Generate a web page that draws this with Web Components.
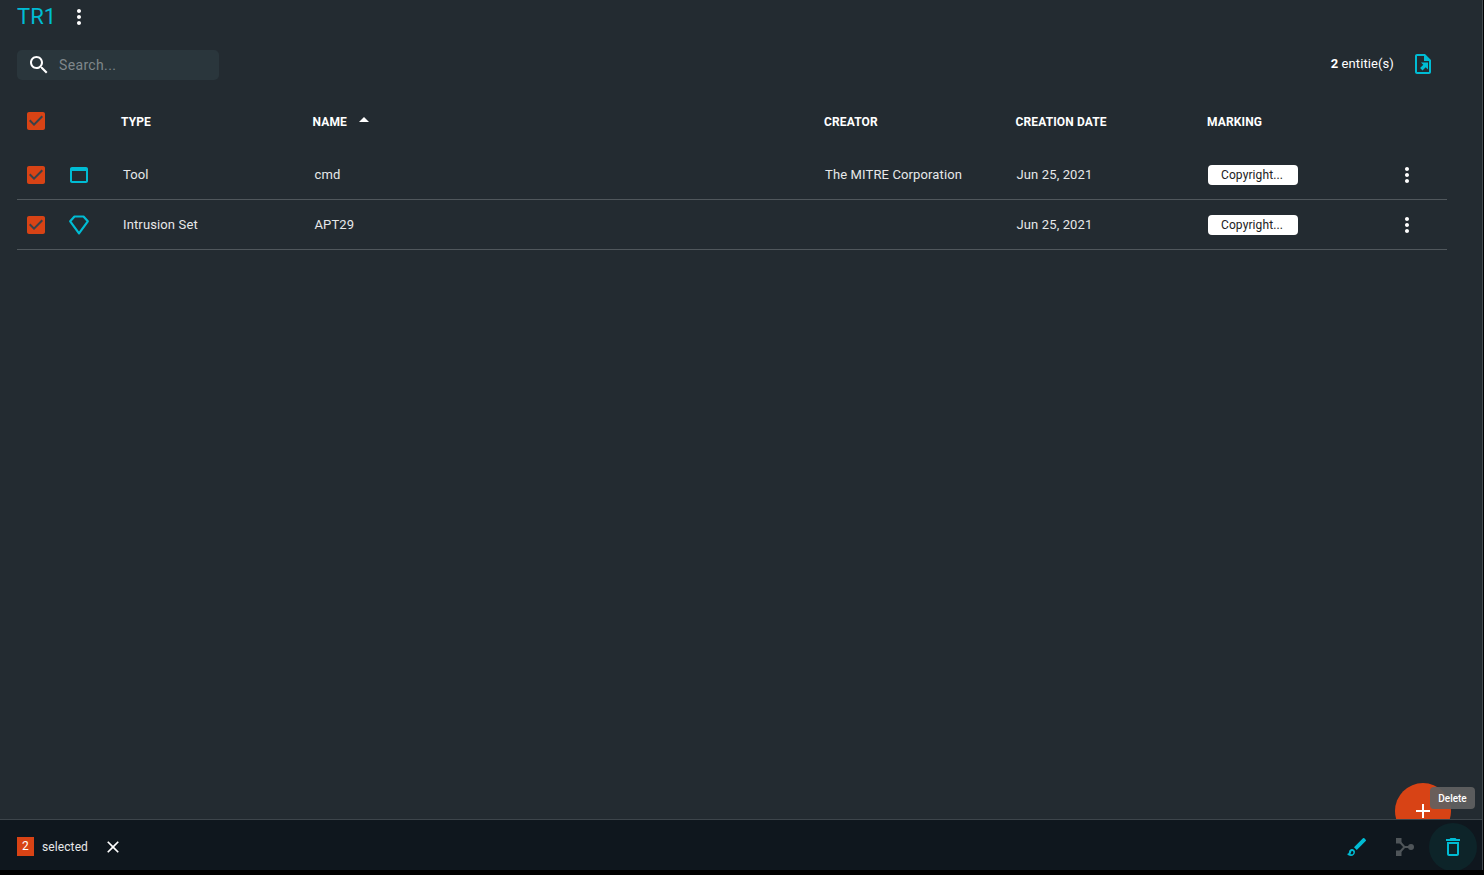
<!DOCTYPE html>
<html>
<head>
<meta charset="utf-8">
<title>TR1</title>
<style>
    html, body { margin: 0; height: 100%; background: #000; overflow: hidden; }
    body { font-family: Roboto, "Liberation Sans", sans-serif; color: #fff; }
</style>
</head>
<body>
<app-page>
    <report-header slot="top" title-text="TR1"></report-header>
    <search-toolbar slot="top" count="2"></search-toolbar>
    <entity-table slot="top"></entity-table>
    <add-fab slot="over"></add-fab>
    <delete-tooltip slot="over">Delete</delete-tooltip>
    <selection-bar slot="bottom" count="2"></selection-bar>
</app-page>
<script>
const icons = {
    more: '<path d="M12 8c1.1 0 2-.9 2-2s-.9-2-2-2-2 .9-2 2 .9 2 2 2zm0 2c-1.1 0-2 .9-2 2s.9 2 2 2 2-.9 2-2-.9-2-2-2zm0 6c-1.1 0-2 .9-2 2s.9 2 2 2 2-.9 2-2-.9-2-2-2z"/>',
    search: '<path d="M15.5 14h-.79l-.28-.27C15.41 12.59 16 11.11 16 9.5 16 5.91 13.09 3 9.5 3S3 5.91 3 9.5 5.91 16 9.5 16c1.61 0 3.09-.59 4.23-1.57l.27.28v.79l5 4.99L20.49 19l-4.99-5zm-6 0C7.01 14 5 11.99 5 9.5S7.01 5 9.5 5 14 7.01 14 9.5 11.99 14 9.5 14z"/>',
    checked: '<path d="M19 3H5c-1.1 0-2 .9-2 2v14c0 1.1.9 2 2 2h14c1.1 0 2-.9 2-2V5c0-1.1-.9-2-2-2z" fill="#d84315"/><path d="M10 17l-5-5 1.41-1.41L10 14.17l7.59-7.59L19 8l-9 9z" fill="#37424a"/>',
    tool: '<path d="M5 4h14c1.1 0 2 .9 2 2v12c0 1.1-.9 2-2 2H5c-1.1 0-2-.9-2-2V6c0-1.1.9-2 2-2zm0 4v10h14V8H5z"/>',
    diamond: '<path d="M7.5 3.5h9l4.3 4.8L12 20.3 3.2 8.3z" fill="none" stroke="currentColor" stroke-width="2.2" stroke-linejoin="round"/>',
    file: '<path d="M14 2H6c-1.1 0-2 .9-2 2v16c0 1.1.9 2 2 2h12c1.1 0 2-.9 2-2V8l-6-6zm4 18H6V4h7v5h5v11z"/><path d="M10 10.5h7v7l-2.3-2.3-3.2 3.2-2.4-2.4 3.2-3.2z"/>',
    sort: '<path d="M7 14l5-5 5 5z"/>',
    close: '<path d="M19 6.41L17.59 5 12 10.59 6.41 5 5 6.41 10.59 12 5 17.59 6.41 19 12 13.41 17.59 19 19 17.59 13.41 12z"/>',
    plus: '<path d="M19 13h-6v6h-2v-6H5v-2h6V5h2v6h6v2z"/>',
    brush: '<path d="M7 14c-1.66 0-3 1.34-3 3 0 1.31-1.16 2-2 2 .92 1.22 2.49 2 4 2 2.21 0 4-1.79 4-4 0-1.66-1.34-3-3-3zm0 5.2c-.2 0-1.2-.1-1.6-.3.4-.5.8-1.1.8-1.9 0-.6.4-1 .8-1 .8 0 1.4.6 1.4 1.4 0 1-.6 1.8-1.4 1.8zM20.71 4.63l-1.34-1.34a.996.996 0 0 0-1.41 0L9 12.25 11.75 15l8.96-8.96a.996.996 0 0 0 0-1.41z"/>',
    merge: '<path d="M3 3h5.5v5.5H3zM3 15.5h5.5V21H3z"/><circle cx="18" cy="12" r="3"/><path d="M6 6l5.5 6L6 18M11 12h7" fill="none" stroke="currentColor" stroke-width="2"/>',
    trash: '<path d="M6 19c0 1.1.9 2 2 2h8c1.1 0 2-.9 2-2V7H6v12zM8 9h8v10H8V9zm7.5-5l-1-1h-5l-1 1H5v2h14V4h-3.5z"/>'
};

function svgIcon(name, size, color) {
    return `<svg width="${size}" height="${size}" viewBox="0 0 24 24" fill="${color}" style="display:block;flex:none;color:${color}">${icons[name]}</svg>`;
}

class AppPage extends HTMLElement {
    constructor() {
        super();
        this.attachShadow({ mode: 'open' });
        this.shadowRoot.innerHTML = `
            <style>
                :host { display: block; position: relative; width: 1484px; height: 875px; overflow: hidden; background: #000; }
                .shell { display: flex; flex-direction: column; width: 1482px; height: 870px; background: #232b31; border-right: 1px solid #3f474d; overflow: hidden; }
                .main { flex: 1; min-height: 0; padding: 0 37px 0 17px; display: flex; flex-direction: column; }
                .over { position: absolute; inset: 0; pointer-events: none; }
            </style>
            <div class="shell">
                <div class="main"><slot name="top"></slot></div>
                <slot name="bottom"></slot>
            </div>
            <div class="over"><slot name="over"></slot></div>
        `;
    }
}

class ReportHeader extends HTMLElement {
    constructor() {
        super();
        this.attachShadow({ mode: 'open' });
    }
    connectedCallback() {
        this.shadowRoot.innerHTML = `
            <style>
                :host { display: flex; align-items: center; height: 33px; }
                h1 { margin: 0; font: 400 22px/33px Roboto, sans-serif; color: #00bcd4; width: 50px; }
                .btn { width: 24px; height: 24px; }
            </style>
            <h1>${this.getAttribute('title-text')}</h1>
            <div class="btn">${svgIcon('more', 24, '#fff')}</div>
        `;
    }
}

class SearchToolbar extends HTMLElement {
    constructor() {
        super();
        this.attachShadow({ mode: 'open' });
    }
    connectedCallback() {
        this.shadowRoot.innerHTML = `
            <style>
                :host { display: flex; align-items: center; justify-content: space-between; height: 30px; margin-top: 17px; padding-right: 10px; }
                .search { display: flex; align-items: center; gap: 8px; width: 202px; height: 30px; background: #2a363c; border-radius: 5px; padding-left: 10px; box-sizing: border-box; }
                .ph { font: 400 14px Roboto, sans-serif; letter-spacing: .35px; color: #7f878b; }
                .right { display: flex; align-items: center; gap: 17px; margin-top: -3px; }
                .count { font: 400 13px Roboto, sans-serif; letter-spacing: .1px; color: #fff; }
                b { font-weight: 700; }
            </style>
            <div class="search">${svgIcon('search', 24, '#fff')}<span class="ph">Search...</span></div>
            <div class="right">
                <span class="count"><b>${this.getAttribute('count')}</b> entitie(s)</span>
                ${svgIcon('file', 24, '#00bcd4')}
            </div>
        `;
    }
}

class EntityTable extends HTMLElement {
    constructor() {
        super();
        this.attachShadow({ mode: 'open' });
    }
    connectedCallback() {
        const rows = [
            { icon: 'tool', type: 'Tool', name: 'cmd', creator: 'The MITRE Corporation', date: 'Jun 25, 2021' },
            { icon: 'diamond', type: 'Intrusion Set', name: 'APT29', creator: '', date: 'Jun 25, 2021' }
        ];
        const columns = '50px 54px 191.5px 511.5px 191.5px 191.5px 188px 52px';
        this.shadowRoot.innerHTML = `
            <style>
                :host { display: block; margin-top: 17px; font-family: Roboto, sans-serif; letter-spacing: .13px; }
                .row { display: grid; grid-template-columns: ${columns}; align-items: center; width: 1430px; box-sizing: border-box; }
                .head { height: 49px; margin-bottom: 4px; font-size: 12px; font-weight: 700; color: #fff; }
                .head .check { margin-bottom: 2px; }
                .body { height: 50px; font-size: 13px; color: #e7e8e9; border-bottom: 1px solid #50575c; box-sizing: border-box; }
                .check { margin-left: 7px; width: 24px; height: 24px; }
                .ico { width: 24px; height: 24px; }
                .sort { display: flex; align-items: center; }
                .sort svg { margin: -4px 0 0 5px; }
                .cell { padding-left: 2px; }
                .cell.late { padding-left: 1px; }
                .chip { margin-left: 1px; width: 90px; height: 20px; padding-right: 2px; box-sizing: border-box; background: #fff; color: #222; border-radius: 4px; font-size: 12px; letter-spacing: .1px; line-height: 20px; text-align: center; }
                .more { width: 24px; height: 24px; }
            </style>
            <div class="row head">
                <div class="check">${svgIcon('checked', 24, 'none')}</div>
                <div></div>
                <span>TYPE</span>
                <span class="sort">NAME ${svgIcon('sort', 24, '#fff')}</span>
                <span>CREATOR</span>
                <span>CREATION DATE</span>
                <span>MARKING</span>
                <div></div>
            </div>
            ${rows.map(r => `
                <div class="row body">
                    <div class="check">${svgIcon('checked', 24, 'none')}</div>
                    <div class="ico">${svgIcon(r.icon, 24, '#00bcd4')}</div>
                    <div class="cell">${r.type}</div>
                    <div class="cell">${r.name}</div>
                    <div class="cell late">${r.creator}</div>
                    <div class="cell late">${r.date}</div>
                    <div class="chip">Copyright...</div>
                    <div class="more">${svgIcon('more', 24, '#fff')}</div>
                </div>
            `).join('')}
        `;
    }
}

class AddFab extends HTMLElement {
    constructor() {
        super();
        this.attachShadow({ mode: 'open' });
        this.shadowRoot.innerHTML = `
            <style>
                :host { position: absolute; left: 1395px; top: 783px; width: 56px; height: 36px; overflow: hidden; display: block; }
                .disc { width: 56px; height: 56px; border-radius: 50%; background: #d84315; display: flex; align-items: center; justify-content: center; }
            </style>
            <div class="disc">${svgIcon('plus', 24, '#fff')}</div>
        `;
    }
}

class DeleteTooltip extends HTMLElement {
    constructor() {
        super();
        this.attachShadow({ mode: 'open' });
        this.shadowRoot.innerHTML = `
            <style>
                :host { position: absolute; left: 1430px; top: 787px; width: 45px; height: 22px; display: flex; align-items: center; justify-content: center; background: rgba(97,97,97,.92); border-radius: 4px; color: #fff; font: 500 10px Roboto, sans-serif; }
            </style>
            <slot></slot>
        `;
    }
}

class SelectionBar extends HTMLElement {
    constructor() {
        super();
        this.attachShadow({ mode: 'open' });
    }
    connectedCallback() {
        this.shadowRoot.innerHTML = `
            <style>
                :host { display: flex; align-items: center; height: 51px; flex: none; background: #0f171e; border-top: 1px solid #3d454b; box-sizing: border-box; padding: 3px 5px 0 17px; font: 400 12px Roboto, sans-serif; letter-spacing: .1px; color: #e7e8e9; }
                .num { width: 17px; height: 19px; background: #d84315; color: #fff; text-align: center; line-height: 19px; }
                .label { margin-left: 8px; }
                .x { margin-left: 15px; width: 20px; height: 20px; }
                .actions { margin-left: auto; display: flex; align-items: center; }
                .btn { width: 48px; height: 48px; display: flex; align-items: center; justify-content: center; border-radius: 50%; }
                .active { background: #0d2429; }
            </style>
            <span class="num">${this.getAttribute('count')}</span>
            <span class="label">selected</span>
            <div class="x">${svgIcon('close', 20, '#fff')}</div>
            <div class="actions">
                <div class="btn">${svgIcon('brush', 24, '#00bcd4')}</div>
                <div class="btn">${svgIcon('merge', 24, '#4f5559')}</div>
                <div class="btn active">${svgIcon('trash', 24, '#00bcd4')}</div>
            </div>
        `;
    }
}

customElements.define('app-page', AppPage);
customElements.define('report-header', ReportHeader);
customElements.define('search-toolbar', SearchToolbar);
customElements.define('entity-table', EntityTable);
customElements.define('add-fab', AddFab);
customElements.define('delete-tooltip', DeleteTooltip);
customElements.define('selection-bar', SelectionBar);
</script>
</body>
</html>
